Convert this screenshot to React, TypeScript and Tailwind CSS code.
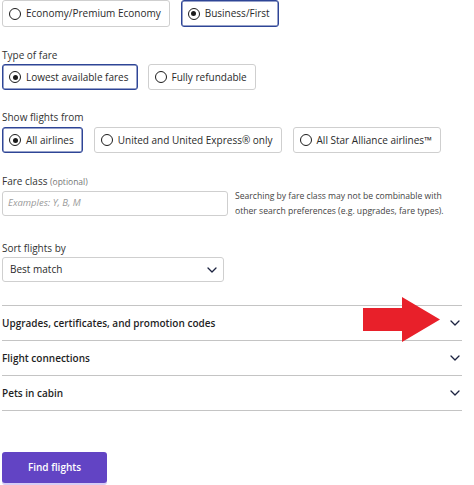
import React from 'react';

function Radio({ checked }: { checked?: boolean }) {
  return (
    <span className="flex h-[12px] w-[12px] shrink-0 items-center justify-center rounded-full border-[1.5px] border-[#1b1b1b]">
      {checked && <span className="h-[5px] w-[5px] rounded-full bg-[#1b1b1b]" />}
    </span>
  );
}

function Option({ label, checked, h = 'h-[26px]' }: { label: string; checked?: boolean; h?: string }) {
  return (
    <div
      className={`flex ${h} items-center gap-[5px] whitespace-nowrap rounded-[3px] border pl-[6px] pr-[8px] text-[10px] text-[#2a2a2a] ${
        checked ? 'border-[#2e4596] shadow-[inset_0_0_0_0.5px_#2e4596]' : 'border-[#cfcfcf]'
      }`}
    >
      <Radio checked={checked} />
      <span>{label}</span>
    </div>
  );
}

function Chevron() {
  return (
    <svg width="10" height="6" viewBox="0 0 10 6" fill="none">
      <path d="M1 1l4 4 4-4" stroke="#1c2340" strokeWidth="1.3" strokeLinecap="round" strokeLinejoin="round" />
    </svg>
  );
}

const sections = ['Upgrades, certificates, and promotion codes', 'Flight connections', 'Pets in cabin'];

export default function App() {
  return (
    <div className="relative h-[485px] w-[474px] overflow-hidden bg-white pl-[2px] font-['Open_Sans',sans-serif] text-[#333]">
      <div className="flex gap-[11px]">
        <Option label="Economy/Premium Economy" h="h-[27px]" />
        <Option label="Business/First" checked h="h-[27px]" />
      </div>

      <div className="mt-[20px] mb-[1px] text-[10px] leading-[16px]">Type of fare</div>
      <div className="flex gap-[10px]">
        <Option label="Lowest available fares" checked />
        <Option label="Fully refundable" />
      </div>

      <div className="mt-[19px] mb-[2px] text-[10px] leading-[16px]">Show flights from</div>
      <div className="flex gap-[11px]">
        <Option label="All airlines" checked />
        <Option label="United and United Express® only" />
        <Option label="All Star Alliance airlines™" />
      </div>

      <div className="mt-[20px] mb-[1px] text-[10px] leading-[16px]">
        Fare class <span className="text-[8.5px] text-[#777]">(optional)</span>
      </div>
      <div className="flex h-[25px] items-center gap-[7px]">
        <div className="flex h-[25px] w-[226px] items-center rounded-[3px] border border-[#cfcfcf] px-[5px] text-[9.5px] italic text-[#9a9a9a]">
          Examples: Y, B, M
        </div>
        <p className="mt-[1px] whitespace-nowrap text-[8.6px] leading-[15px] text-[#444]">
          Searching by fare class may not be combinable with
          <br />
          other search preferences (e.g. upgrades, fare types).
        </p>
      </div>

      <div className="mt-[24px] mb-[1px] text-[10px] leading-[16px]">Sort flights by</div>
      <div className="flex h-[25px] w-[222px] items-center justify-between rounded-[3px] border border-[#cfcfcf] pl-[7px] pr-[6px] text-[10px] text-[#2a2a2a]">
        <span>Best match</span>
        <Chevron />
      </div>

      <div className="mt-[23px] w-[460px] border-b border-[#c4c4c4]">
        {sections.map((s) => (
          <div key={s} className="flex h-[35px] items-center justify-between border-t border-[#c4c4c4] pr-[2px] text-[10px] font-semibold text-[#1f1f1f]">
            <span>{s}</span>
            <Chevron />
          </div>
        ))}
      </div>

      <button className="mt-[41px] h-[31px] w-[105px] rounded-[3px] bg-[#6244c4] text-[10px] font-semibold text-white shadow-[0_2px_0_#d6cdf5]">
        Find flights
      </button>

      <svg className="absolute left-[363px] top-[297px]" width="78" height="46" viewBox="0 0 78 46">
        <polygon points="0,11 39,11 39,0 77,22.5 39,45 39,34 0,34" fill="#e8202a" />
      </svg>
    </div>
  );
}
